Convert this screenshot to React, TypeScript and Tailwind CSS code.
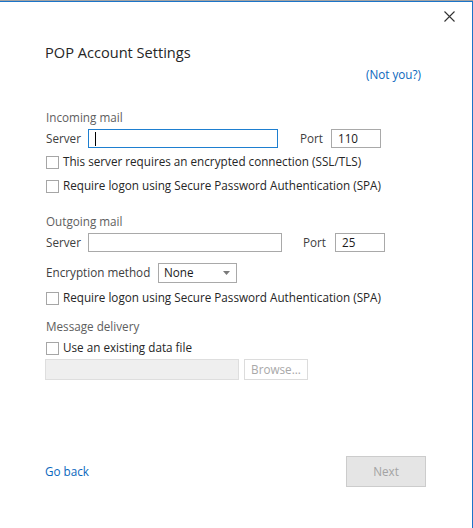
const font = { fontFamily: '"Open Sans", "Noto Sans", Arial, sans-serif' };

function CheckRow({ label, className = "" }: { label: string; className?: string }) {
  return (
    <label className={`flex h-[16px] items-center gap-[4px] ${className}`}>
      <span className="block h-[13px] w-[13px] border border-[#a6a6a6] bg-white" />
      <span className="text-[11.7px] text-[#262626]">{label}</span>
    </label>
  );
}

function Field({ width, focused = false, value = "" }: { width: string; focused?: boolean; value?: string }) {
  return (
    <div
      className={`relative flex h-[19px] items-center border bg-white pl-[6px] text-[11.7px] text-[#1a1a1a] ${width} ${
        focused ? "border-[#1e7fd0]" : "border-[#a9a9a9]"
      }`}
    >
      {focused && <span className="block h-[14px] w-px bg-black" />}
      {value}
    </div>
  );
}

export default function App() {
  return (
    <div className="w-[473px] h-[528px] bg-white overflow-hidden" style={font}>
      <div className="h-px bg-[#a3a3a3]" />
      <div className="flex h-[527px] w-[473px] flex-col border-t border-r border-[#1b74c8]">
        {/* close button */}
        <div className="flex h-[29px] items-center justify-end pr-[17px]">
          <svg width="11" height="11" viewBox="0 0 11 11">
            <path d="M0.5 0.5 L10.5 10.5 M10.5 0.5 L0.5 10.5" stroke="#333" strokeWidth="1.1" />
          </svg>
        </div>

        <h1 className="mt-[10px] flex h-[24px] items-center pl-[45px] text-[14.6px] font-normal text-[#262626]">
          POP Account Settings
        </h1>
        <div className="mt-[2px] flex h-[16px] items-center justify-end pr-[51px]">
          <a className="text-[11.7px] text-[#0a67bd]">(Not you?)</a>
        </div>

        <div className="flex flex-col pl-[46px]">
          <div className="mt-[27px] flex h-[16px] items-center text-[11.7px] text-[#5e5e5e]">Incoming mail</div>
          <div className="mt-[3px] flex h-[19px] items-center text-[11.7px] text-[#404040]">
            <span className="w-[42px]">Server</span>
            <Field width="w-[190px]" focused />
            <span className="ml-[22px] w-[31px]">Port</span>
            <Field width="w-[50px]" value="110" />
          </div>
          <CheckRow className="mt-[6px]" label="This server requires an encrypted connection (SSL/TLS)" />
          <CheckRow className="mt-[8px]" label="Require logon using Secure Password Authentication (SPA)" />

          <div className="mt-[20px] flex h-[16px] items-center text-[11.7px] text-[#5e5e5e]">Outgoing mail</div>
          <div className="mt-[3px] flex h-[19px] items-center text-[11.7px] text-[#404040]">
            <span className="w-[42px]">Server</span>
            <Field width="w-[194px]" />
            <span className="ml-[21px] w-[32px]">Port</span>
            <Field width="w-[50px]" value="25" />
          </div>
          <div className="mt-[11px] flex h-[20px] items-center text-[11.7px] text-[#404040]">
            <span className="w-[112px]">Encryption method</span>
            <div className="flex h-[20px] w-[79px] items-center justify-between border border-[#a9a9a9] bg-white pl-[5px] pr-[6px] text-[11.7px] text-[#1a1a1a]">
              <span>None</span>
              <svg width="7" height="4" viewBox="0 0 7 4">
                <path d="M0 0 H7 L3.5 4 Z" fill="#7a7a7a" />
              </svg>
            </div>
          </div>
          <CheckRow className="mt-[7px]" label="Require logon using Secure Password Authentication (SPA)" />

          <div className="mt-[13px] flex h-[16px] items-center text-[11.7px] text-[#5e5e5e]">Message delivery</div>
          <CheckRow className="mt-[5px]" label="Use an existing data file" />
          <div className="mt-[3px] -ml-px flex h-[21px] items-center gap-[5px]">
            <div className="h-[21px] w-[194px] border border-[#dedede] bg-[#efefef]" />
            <button className="flex h-[21px] w-[64px] items-center justify-center border border-[#dcdcdc] bg-white text-[11.7px] text-[#a8a8a8]">
              Browse...
            </button>
          </div>
        </div>

        {/* footer */}
        <div className="mt-[76px] flex h-[31px] items-center justify-between pl-[45px] pr-[46px]">
          <a className="text-[11.7px] text-[#0a67bd]">Go back</a>
          <button className="flex h-[31px] w-[80px] items-center justify-center border border-[#cccccc] bg-[#e5e5e5] text-[11.7px] text-[#a3a3a3]">
            Next
          </button>
        </div>
      </div>
    </div>
  );
}
